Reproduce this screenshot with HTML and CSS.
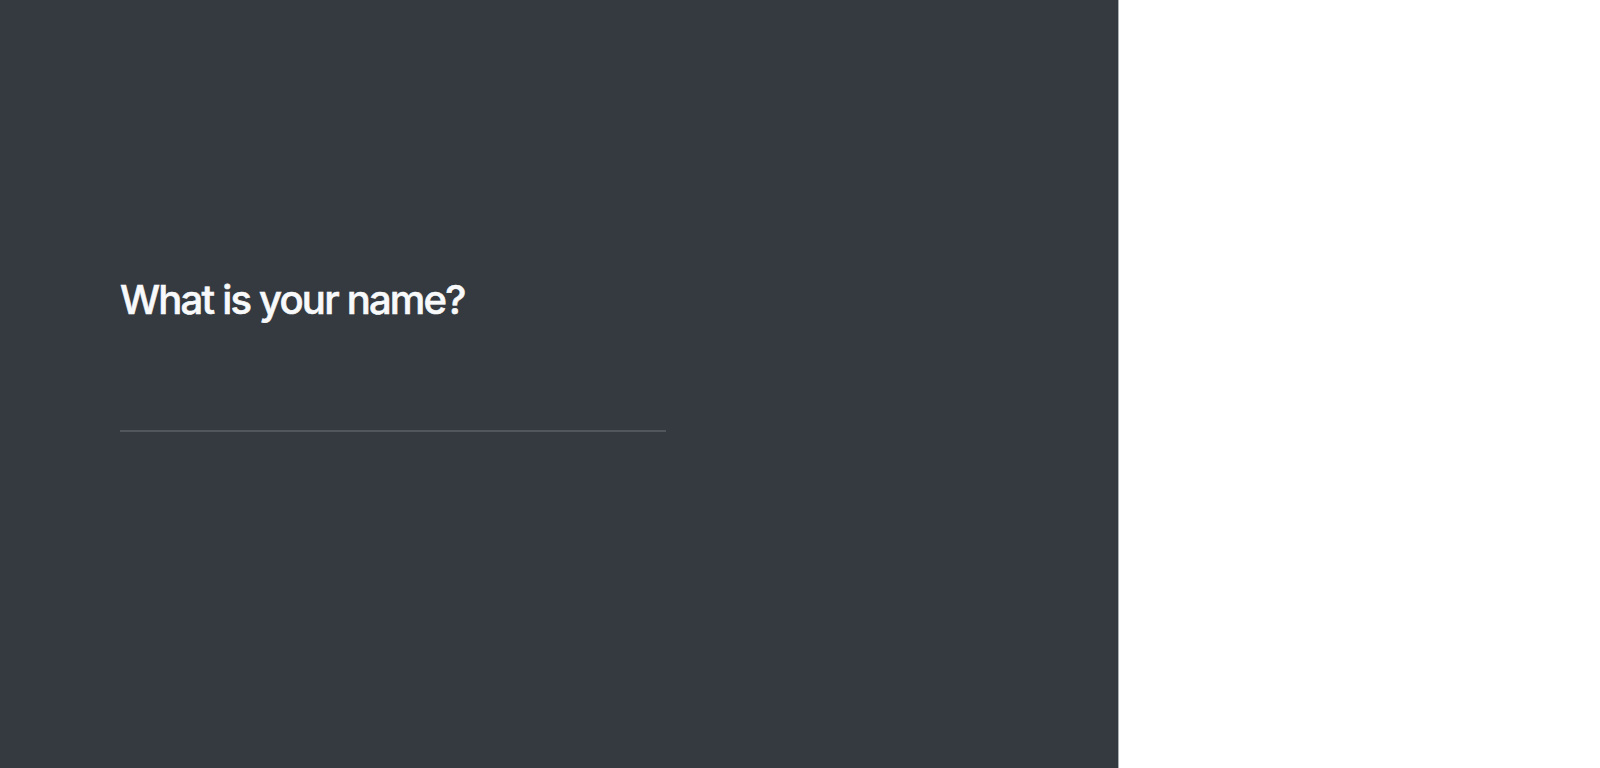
FILE: index.html
```html
<!DOCTYPE html>
<html lang="en">
<head>
<meta charset="utf-8">
<title>What is your name?</title>
<link rel="stylesheet" href="styles.css">
</head>
<body>
<div class="layout">
  <main class="panel">
    <form class="question">
      <h1 class="question-title">What is your name?</h1>
      <input class="answer" type="text" aria-label="Your name">
    </form>
  </main>
  <aside class="side"></aside>
</div>
</body>
</html>
```

FILE: styles.css
```css
html, body {
  margin: 0;
  padding: 0;
  height: 100%;
}
body {
  font-family: Inter, "Noto Sans", sans-serif;
  background: #ffffff;
}
.layout {
  display: flex;
  height: 768px;
}
.panel {
  width: 1119px;
  flex: none;
  background: #343a40;
  border-right: 1px solid #aab0b6;
  padding: 276px 0 0 120px;
  box-sizing: border-box;
}
.question {
  display: flex;
  flex-direction: column;
  gap: 60px;
  width: 546px;
}
.question-title {
  margin: 0;
  font-size: 40px;
  line-height: 48px;
  font-weight: 500;
  color: #f8f9fa;
  letter-spacing: -1.8px;
  -webkit-text-stroke: 0.6px #f8f9fa;
}
.answer {
  display: block;
  width: 100%;
  height: 48px;
  box-sizing: border-box;
  margin: 0;
  padding: 0;
  background: transparent;
  border: 0;
  border-bottom: 2px solid #50565c;
  outline: none;
  color: #f8f9fa;
  font-family: inherit;
  font-size: 24px;
}
.side {
  flex: 1;
  background: #ffffff;
}
```
